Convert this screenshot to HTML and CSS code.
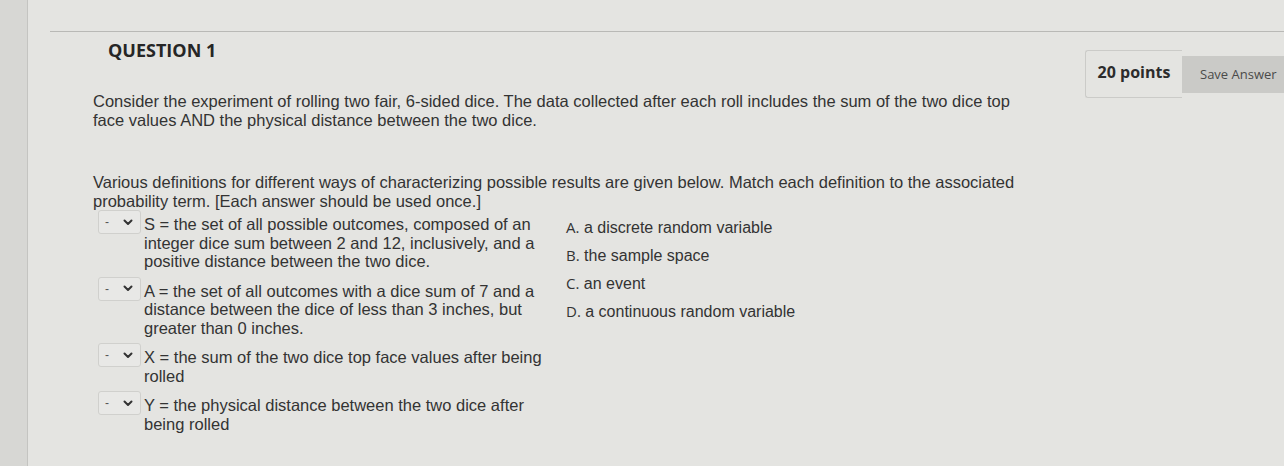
FILE: index.html
```html
<!DOCTYPE html>
<html lang="en">
<head>
<meta charset="utf-8">
<title>Question 1</title>
<link rel="stylesheet" href="styles.css">
</head>
<body>
<div class="page">
  <div class="sidebar"></div>
  <div class="main">
    <div class="rule"></div>
    <div class="question">
      <div class="content">
        <h2 class="qtitle">QUESTION 1</h2>
        <p class="intro">Consider the experiment of rolling two fair, 6-sided dice. The data collected after each roll includes the sum of the two dice top face values AND the physical distance between the two dice.</p>
        <p class="intro intro-2">Various definitions for different ways of characterizing possible results are given below. Match each definition to the associated probability term. [Each answer should be used once.]</p>
        <div class="match">
          <div class="defs">
            <div class="def-row">
              <div class="select"><span class="dash">-</span><svg class="chev" width="10" height="7" viewBox="0 0 10 7"><polyline points="1.5,1.5 5,5 8.5,1.5"/></svg></div>
              <div class="def-text">S = the set of all possible outcomes, composed of an integer dice sum between 2 and 12, inclusively, and a positive distance between the two dice.</div>
            </div>
            <div class="def-row">
              <div class="select"><span class="dash">-</span><svg class="chev" width="10" height="7" viewBox="0 0 10 7"><polyline points="1.5,1.5 5,5 8.5,1.5"/></svg></div>
              <div class="def-text">A = the set of all outcomes with a dice sum of 7 and a distance between the dice of less than 3 inches, but greater than 0 inches.</div>
            </div>
            <div class="def-row">
              <div class="select"><span class="dash">-</span><svg class="chev" width="10" height="7" viewBox="0 0 10 7"><polyline points="1.5,1.5 5,5 8.5,1.5"/></svg></div>
              <div class="def-text">X = the sum of the two dice top face values after being rolled</div>
            </div>
            <div class="def-row">
              <div class="select"><span class="dash">-</span><svg class="chev" width="10" height="7" viewBox="0 0 10 7"><polyline points="1.5,1.5 5,5 8.5,1.5"/></svg></div>
              <div class="def-text">Y = the physical distance between the two dice after being rolled</div>
            </div>
          </div>
          <ul class="answers">
            <li><span class="lbl">A.</span> a discrete random variable</li>
            <li><span class="lbl">B.</span> the sample space</li>
            <li><span class="lbl">C.</span> an event</li>
            <li><span class="lbl">D.</span> a continuous random variable</li>
          </ul>
        </div>
      </div>
      <div class="aside">
        <div class="points">20 points</div>
        <div class="save">Save Answer</div>
      </div>
    </div>
  </div>
</div>
</body>
</html>
```

FILE: styles.css
```css
html, body {
  margin: 0;
  padding: 0;
}

body {
  background: #e4e4e1;
  font-family: "Liberation Sans", Arial, sans-serif;
  color: #333333;
  overflow: hidden;
}

.page {
  display: flex;
  min-height: 466px;
}

.sidebar {
  flex: none;
  width: 27px;
  background: #d7d7d4;
  border-right: 1px solid #c4c4c1;
}

.main {
  flex: 1;
  min-width: 0;
  padding-top: 31px;
}

.rule {
  margin-left: 22px;
  border-top: 1px solid #b9b9b6;
}

.question {
  display: grid;
  grid-template-columns: 1fr 199px;
}

.content {
  padding-left: 65px;
}

.qtitle {
  margin: 6px 0 0 15px;
  font-family: "Open Sans", sans-serif;
  font-weight: 700;
  font-size: 18px;
  line-height: 24px;
  color: #262626;
}

.intro {
  margin: 30px 0 0;
  max-width: 930px;
  font-size: 16.5px;
  line-height: 19px;
}

.intro-2 {
  margin-top: 43px;
  line-height: 18.5px;
}

.match {
  display: flex;
  align-items: flex-start;
}

.defs {
  display: flex;
  flex-direction: column;
  gap: 6px;
  margin-left: 5px;
}

.def-row {
  display: flex;
  gap: 3px;
}

.select {
  flex: none;
  box-sizing: border-box;
  width: 43px;
  height: 24px;
  border: 1px solid #d0d0cd;
  border-radius: 3px;
  background: #e8e8e6;
  display: flex;
  align-items: center;
  justify-content: space-between;
  padding: 0 7px 0 6px;
}

.dash {
  font-size: 12px;
  color: #555;
  line-height: 1;
}

.chev polyline {
  fill: none;
  stroke: #333;
  stroke-width: 2;
  stroke-linecap: round;
  stroke-linejoin: round;
}

.def-text {
  width: 410px;
  margin-top: 5px;
  font-size: 16.5px;
  line-height: 18.5px;
}

.answers {
  list-style: none;
  margin: 8px 0 0 12px;
  padding: 0;
  display: flex;
  flex-direction: column;
  gap: 9px;
  font-size: 16px;
  line-height: 19px;
}

.lbl {
  font-family: "Open Sans", sans-serif;
  font-size: 15px;
}

.aside {
  align-self: start;
  display: flex;
  align-items: center;
  margin-top: 18px;
  height: 48px;
}

.points {
  flex: none;
  box-sizing: border-box;
  width: 97px;
  height: 48px;
  border: 1px solid #cbcbc8;
  border-right: none;
  border-radius: 3px 0 0 3px;
  display: flex;
  align-items: center;
  justify-content: center;
  padding-bottom: 5px;
  font-family: "Open Sans", sans-serif;
  font-weight: 700;
  font-size: 16px;
  color: #2c2c2c;
}

.save {
  flex: 1;
  height: 37px;
  background: #cacac7;
  display: flex;
  align-items: center;
  padding-left: 18px;
  white-space: nowrap;
  overflow: hidden;
  font-family: "Open Sans", sans-serif;
  font-size: 13px;
  color: #4a4a4a;
}
```
